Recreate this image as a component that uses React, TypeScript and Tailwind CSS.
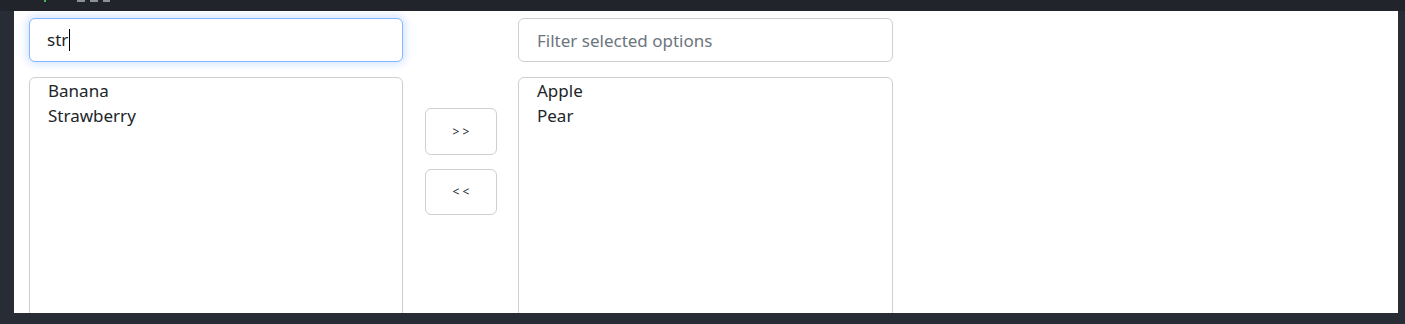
import React from "react";

const font = { fontFamily: '"Noto Sans", "Open Sans", sans-serif' };

const ListBox: React.FC<{ items: string[] }> = ({ items }) => (
  <div className="h-[300px] w-full shrink-0 rounded-[6px] border border-[#cfcfcf] bg-white pl-[18px]">
    {items.map((item) => (
      <div key={item} className="text-[17px] leading-[25px] text-[#212529]">
        {item}
      </div>
    ))}
  </div>
);

const MoveButton: React.FC<{ label: string; tall?: boolean }> = ({ label, tall }) => (
  <button
    className={`flex w-[72px] shrink-0 items-center justify-center rounded-[6px] border border-[#cfcfcf] bg-white text-[12px] text-[#212529] ${
      tall ? "h-[47px]" : "h-[46px]"
    }`}
  >
    {label}
  </button>
);

export default function App() {
  return (
    <div className="flex h-[324px] w-[1405px] flex-col overflow-hidden bg-[#282c34]" style={font}>
      {/* editor tab strip, mostly cut off */}
      <div className="flex h-[11px] shrink-0 items-start bg-[#21252b]">
        <div className="ml-[44px] h-[2px] w-[2px] bg-[#3fb950]" />
        <div className="ml-[31px] flex gap-[5px]">
          <div className="h-[2px] w-[8px] bg-[#8a8f98]" />
          <div className="h-[2px] w-[8px] bg-[#8a8f98]" />
          <div className="h-[2px] w-[7px] bg-[#8a8f98]" />
        </div>
      </div>

      <div className="flex min-h-0 flex-1">
        <div className="w-[14px] shrink-0 bg-[#282c34]" />
        <div className="mb-[11px] flex min-w-0 flex-1 gap-[22px] overflow-hidden bg-white pl-[15px] pt-[7px]">
          {/* available column */}
          <div className="flex w-[374px] shrink-0 flex-col gap-[15px]">
            <div className="flex h-[44px] shrink-0 items-center rounded-[6px] border border-[#86b7fe] bg-white pl-[17px] shadow-[0_0_8px_2px_rgba(13,110,253,0.2)]">
              <span className="text-[17px] text-[#212529]">str</span>
              <span className="ml-[1px] h-[22px] w-[1px] bg-black" />
            </div>
            <ListBox items={["Banana", "Strawberry"]} />
          </div>

          {/* move buttons */}
          <div className="flex w-[72px] shrink-0 flex-col gap-[14px] pt-[90px]">
            <MoveButton label="> >" tall />
            <MoveButton label="< <" />
          </div>

          {/* selected column */}
          <div className="ml-[-1px] flex w-[375px] shrink-0 flex-col gap-[15px]">
            <input
              placeholder="Filter selected options"
              className="h-[44px] shrink-0 rounded-[6px] border border-[#cfcfcf] bg-white pl-[18px] text-[17px] text-[#212529] outline-none placeholder:text-[#6c757d]"
            />
            <ListBox items={["Apple", "Pear"]} />
          </div>
        </div>
        <div className="w-[7px] shrink-0 bg-[#282c34]" />
      </div>
    </div>
  );
}
